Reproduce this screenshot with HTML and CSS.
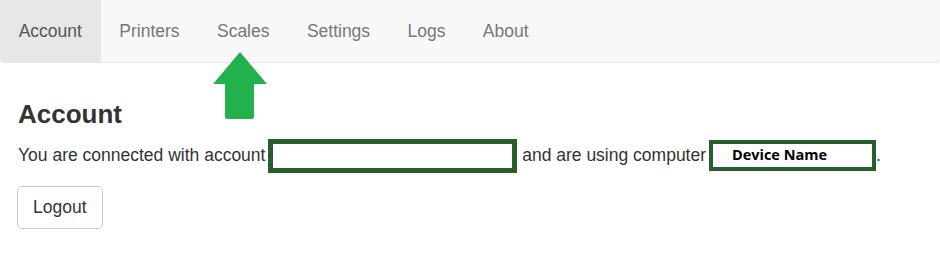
FILE: index.html
```html
<!DOCTYPE html>
<html>
<head>
<meta charset="utf-8">
<link rel="stylesheet" href="styles.css">
</head>
<body>
<nav class="navbar">
  <ul class="nav">
    <li class="nav-item active">Account</li>
    <li class="nav-item">Printers</li>
    <li class="nav-item">Scales</li>
    <li class="nav-item">Settings</li>
    <li class="nav-item">Logs</li>
    <li class="nav-item">About</li>
  </ul>
</nav>
<svg class="arrow" width="56" height="68" viewBox="0 0 56 68">
  <path d="M27 0 L54 32 L41 32 L41 65 Q41 67 39 67 L14 67 Q12 67 12 65 L12 32 L0 32 Z" fill="#22b14c"/>
</svg>
<main class="content">
  <h3 class="title">Account</h3>
  <p class="info">You are connected with account <span class="mask mask-account"></span> and are using computer <span class="mask mask-device">Device Name</span>.</p>
  <button class="btn">Logout</button>
</main>
</body>
</html>
```
FILE: styles.css
```css
html, body {
  margin: 0;
  padding: 0;
  background: #fff;
}
body {
  font-family: "Liberation Sans", Arial, sans-serif;
  font-size: 17.5px;
  color: #333;
  position: relative;
}
.navbar {
  height: 62px;
  background: #f8f8f8;
  border-bottom: 1px solid #e7e7e7;
  border-radius: 0 0 4px 4px;
}
.nav {
  list-style: none;
  margin: 0;
  padding: 0;
  display: flex;
  height: 100%;
}
.nav-item {
  padding: 0 18.7px;
  display: flex;
  align-items: center;
  color: #777;
  height: 100%;
}
.nav-item.active {
  background: #e7e7e7;
  color: #555;
  border-bottom-left-radius: 4px;
}
.arrow {
  position: absolute;
  left: 213px;
  top: 52px;
}
.content {
  padding: 0 18px;
}
.title {
  margin: 37px 0 0;
  font-size: 26px;
  font-weight: bold;
  line-height: 1.1;
  color: #333;
}
.info {
  margin: 8px 0 0;
  line-height: 36px;
  height: 36px;
}
.mask {
  display: inline-block;
  box-sizing: border-box;
  border: 5px solid #275e2b;
  background: #fff;
  vertical-align: middle;
  position: relative;
}
.mask-account {
  width: 249px;
  height: 34px;
  margin: 0 0 0 -2px;
  top: 0;
}
.mask-device {
  width: 167px;
  height: 31px;
  border-width: 4.5px;
  margin: 0 0 0 -2px;
  font-family: "Open Sans", sans-serif;
  font-weight: bold;
  font-size: 14.5px;
  color: #000;
  line-height: 21px;
  padding-left: 19px;
  top: 0;
}
.btn {
  margin-top: 13px;
  margin-left: -1px;
  height: 43px;
  padding: 0 15px;
  background: #fff;
  border: 1px solid #ccc;
  border-radius: 5px;
  font-family: "Liberation Sans", Arial, sans-serif;
  font-size: 17.5px;
  color: #333;
}
```
